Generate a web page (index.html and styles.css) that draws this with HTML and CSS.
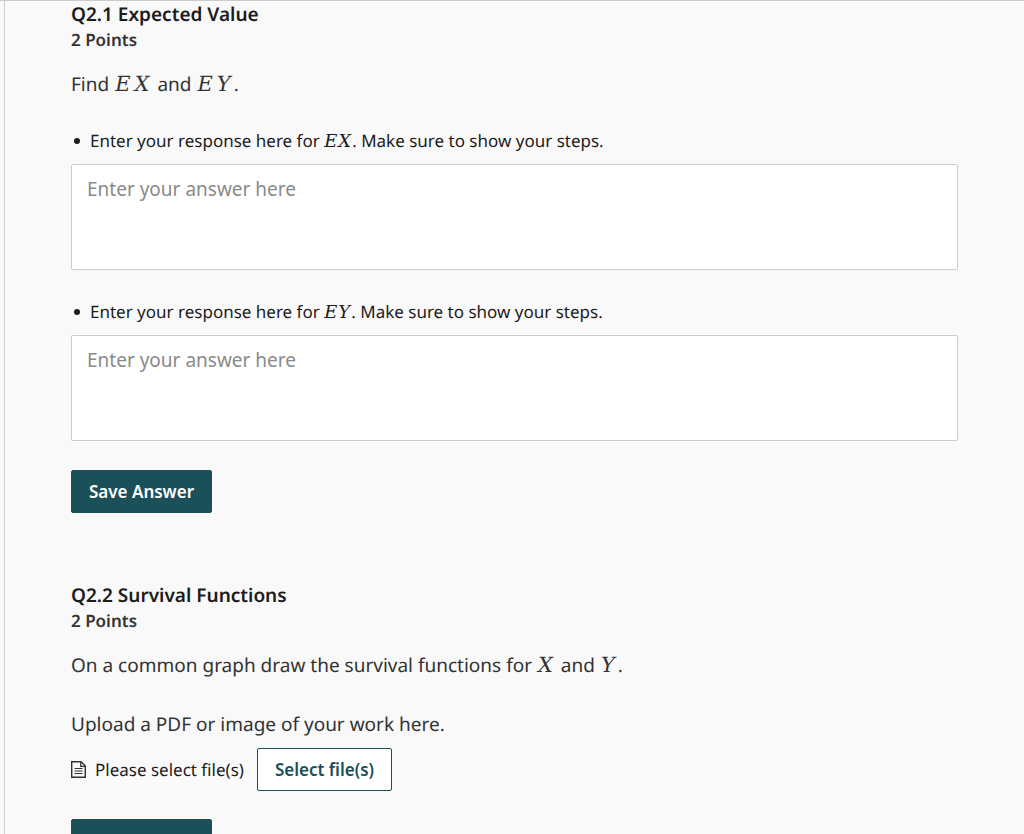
FILE: index.html
```html
<!DOCTYPE html>
<html lang="en">
<head>
    <meta charset="UTF-8">
    <meta name="viewport" content="width=device-width, initial-scale=1.0">
    <title>Assignment</title>
    <link rel="stylesheet" href="styles.css">
</head>
<body>
    <main class="outline">
        <!-- Q2.1 -->
        <section class="question">
            <h2 class="title">Q2.1 Expected Value</h2>
            <div class="points">2 Points</div>
            <p class="prompt">Find <span class="math"><i>E</i><i>X</i></span> and <span class="math"><i>E</i><i>Y</i></span>.</p>

            <form class="answers">
                <div class="field">
                    <label for="answerX">Enter your response here for <span class="math"><i>E</i><i>X</i></span>. Make sure to show your steps.</label>
                    <textarea id="answerX" placeholder="Enter your answer here"></textarea>
                </div>
                <div class="field">
                    <label for="answerY">Enter your response here for <span class="math"><i>E</i><i>Y</i></span>. Make sure to show your steps.</label>
                    <textarea id="answerY" placeholder="Enter your answer here"></textarea>
                </div>
                <button type="button" class="btn btn-primary">Save Answer</button>
            </form>
        </section>

        <!-- Q2.2 -->
        <section class="question">
            <h2 class="title">Q2.2 Survival Functions</h2>
            <div class="points">2 Points</div>
            <p class="prompt">On a common graph draw the survival functions for <span class="math"><i>X</i></span> and <span class="math"><i>Y</i></span>.</p>
            <p class="prompt">Upload a PDF or image of your work here.</p>

            <form>
                <div class="upload">
                    <svg class="file-icon" viewBox="0 0 15 17" fill="none" stroke="#333" aria-hidden="true">
                        <path d="M.7 .7H10L14.3 5V16.3H.7Z" stroke-width="1.4"/>
                        <path d="M9.7 1V5.3H14M3.5 7.5H11.5M3.5 10H11.5M3.5 12.5H11.5" stroke-width="1.2"/>
                    </svg>
                    <span>Please select file(s)</span>
                    <button type="button" class="btn btn-outline">Select file(s)</button>
                </div>
                <button type="button" class="btn btn-primary">Save Answer</button>
            </form>
        </section>
    </main>
</body>
</html>
```
FILE: styles.css
```css
* {
    box-sizing: border-box;
}
html {
    overflow: hidden;
}
body {
    margin: 0;
    background-color: #f9f9f9;
    border-top: 1px solid #ccc;
    font-family: "Noto Sans", "Open Sans", sans-serif;
    font-size: 17px;
    line-height: 26px;
    color: #1c1c1c;
    text-rendering: geometricPrecision;
}
.outline {
    margin-left: 4px;
    padding: 0 66px;
    border-left: 1px solid #ccc;
}
.question {
    margin-bottom: 69px;
}
.title {
    margin: 0;
    font-size: 19px;
    font-weight: 600;
    line-height: 26px;
}
.points {
    font-weight: 600;
    color: #333;
}
.prompt {
    margin: 16px 0 29px;
    font-size: 19px;
    line-height: 30px;
    color: #333;
}
.math {
    font-family: "DejaVu Serif", serif;
    font-size: 18px;
    line-height: 1;
}
.math i {
    margin-right: 1px;
}
.prompt .math {
    font-size: 21px;
}
.prompt .math i {
    margin: 0 3px 0 1px;
}
.field {
    margin-bottom: 29px;
}
.field label {
    display: block;
    margin-left: 3px;
}
.field label::before {
    content: "";
    display: inline-block;
    width: 6px;
    height: 6px;
    margin-right: 10px;
    border-radius: 50%;
    background-color: #1c1c1c;
    vertical-align: 3px;
}
.field textarea {
    display: block;
    width: 100%;
    height: 106px;
    margin-top: 10px;
    padding: 10px 15px;
    border: 1px solid #ccc;
    border-radius: 2px;
    background-color: #fff;
    font: inherit;
    font-size: 19px;
    line-height: 28px;
    resize: none;
}
.field textarea::placeholder {
    color: #8a8a8a;
}
.btn {
    height: 43px;
    padding: 0 17px;
    border: 1px solid #1c5058;
    border-radius: 2px;
    font: inherit;
    font-weight: 600;
    cursor: pointer;
}
.btn-primary {
    background-color: #1c5058;
    color: #fff;
}
.btn-outline {
    background-color: #fff;
    color: #1c5058;
    margin-left: 4px;
}
.upload {
    display: flex;
    align-items: center;
    gap: 9px;
    margin: -20px 0 28px;
}
.file-icon {
    width: 15px;
    height: 17px;
}
```
